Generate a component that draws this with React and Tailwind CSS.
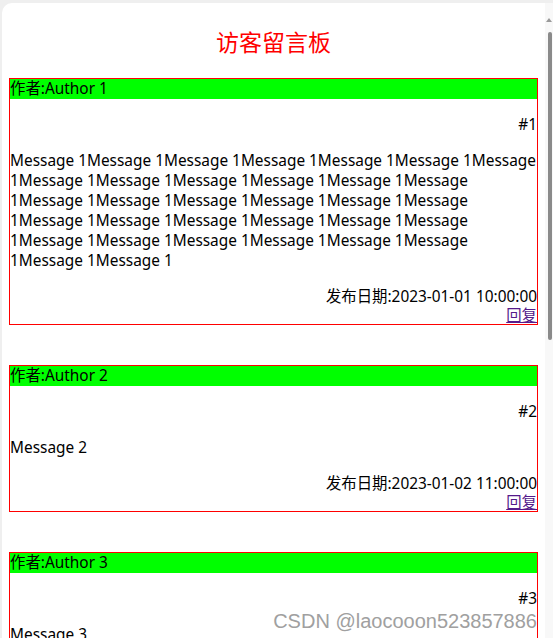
const messages = [
  { id: 1, author: "Author 1", content: "Message 1".repeat(33), date: "2023-01-01 10:00:00" },
  { id: 2, author: "Author 2", content: "Message 2", date: "2023-01-02 11:00:00" },
  { id: 3, author: "Author 3", content: "Message 3", date: "2023-01-03 12:00:00" },
];

function MessageItem({ msg }) {
  return (
    <div className="border border-[#ff0000] mb-[40px]">
      <div className="bg-[#00ff00] h-[20px] leading-[20px]">作者:{msg.author}</div>
      <p className="text-right mt-[16px] leading-[20px]">#{msg.id}</p>
      <p className="mt-[16px] leading-[20px] break-words">{msg.content}</p>
      <p className="text-right mt-[16px] leading-[20px]">发布日期:{msg.date}</p>
      <div className="text-right leading-[17px] h-[17px]">
        <a href="#" className="text-[#551a8b] underline">回复</a>
      </div>
    </div>
  );
}

export default function App() {
  return (
    <div
      className="relative h-[638px] overflow-hidden bg-[#efefef] pt-[3px] pl-[2px] text-[15.4px] text-black"
      style={{ fontFamily: '"Noto Sans", "Noto Sans CJK SC", sans-serif' }}
    >
      <div className="flex h-full bg-white rounded-tl-[10px] overflow-hidden">
        <div className="flex-1 px-[7px]">
          <h1 className="text-center text-[#ff0000] text-[23px] leading-[32px] mt-[23px] mb-[20px]">访客留言板</h1>
          {messages.map((m) => (
            <MessageItem key={m.id} msg={m} />
          ))}
        </div>
        <div className="w-[8px] bg-[#f8f8f8] flex flex-col items-center">
          <div className="mt-[15px] w-0 h-0 border-l-[3px] border-r-[3px] border-b-[4px] border-l-transparent border-r-transparent border-b-[#9a9a9a]"></div>
          <div className="mt-[10px] w-[4px] h-[308px] rounded-full bg-[#8a8a8a] ml-[2px]"></div>
        </div>
      </div>
      <div
        className="absolute right-[16px] top-[608px] text-[20px] leading-[26px] text-[#a0a0a0]"
        style={{ fontFamily: '"Liberation Sans", sans-serif', textShadow: "0 0 1px #fff" }}
      >
        CSDN @laocooon523857886
      </div>
    </div>
  );
}
